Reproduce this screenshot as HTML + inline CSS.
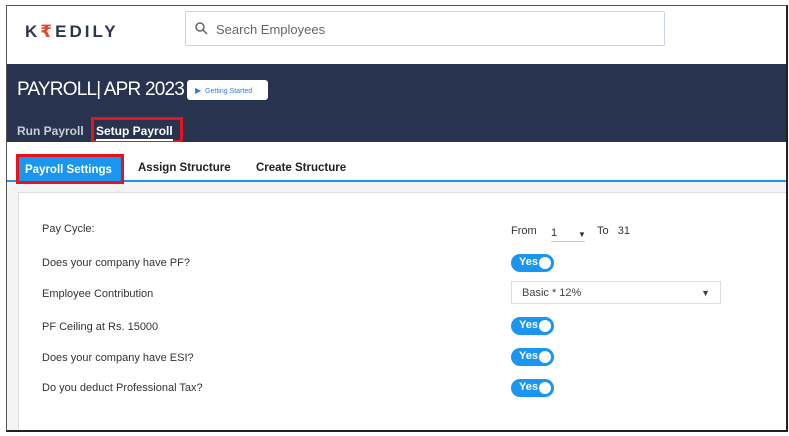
<!DOCTYPE html>
<html><head><meta charset="utf-8"><style>
*{margin:0;padding:0;box-sizing:border-box}
body{width:789px;height:436px;background:#fff;font-family:"Liberation Sans","DejaVu Sans",sans-serif;position:relative;overflow:hidden}
.frame{position:absolute;left:6px;top:5px;width:782px;height:427px;border:1px solid #555;border-right:2px solid #222;border-bottom:2px solid #222;overflow:hidden}
.abs{position:absolute}
.logo{left:18px;top:16px;font-size:17px;font-weight:bold;letter-spacing:3px;color:#2b3550}
.search{left:178px;top:5px;width:480px;height:35px;border:1px solid #c8d4e4;border-radius:2px;color:#666;font-size:13px;padding:10px 0 0 30px}
.nav{left:0;top:58px;width:782px;height:78px;background:#27334f}
.title{left:10px;top:15px;color:#fff;font-size:19px;letter-spacing:-0.8px;white-space:nowrap}
.gs{left:180px;top:16px;width:81px;height:20px;background:#fff;border-radius:3px;color:#2f7de1;font-size:7px;padding:6px 0 0 8px;white-space:nowrap}
.run{left:10px;top:60px;color:#c9ced8;font-size:12px;font-weight:bold}
.setup{left:89px;top:60px;color:#fff;font-size:12px;font-weight:bold;border-bottom:2px solid #fff;padding-bottom:1px}
.red{border:3px solid #e3141c}
.grey{left:0;top:136px;width:782px;height:300px;background:#f4f4f6}
.tabs{left:0;top:136px;width:782px;height:40px;background:#fff;border-bottom:2px solid #1a96f0}
.tab{font-size:11.5px;font-weight:bold;color:#222;top:20px}
.ps{left:9px;top:12px;width:108px;height:30px;background:#1a96f0;color:#fff;font-size:11.5px;font-weight:bold;padding:7px 0 0 6px;border:3px solid #e3141c}
.panel{left:11px;top:186px;width:775px;height:250px;background:#fff;border-left:1px solid #ddd;border-top:1px solid #ddd}
.lbl{font-size:11px;color:#333;left:24px}
.tog{left:504px;width:43px;height:18px;border-radius:9px;background:#1a96f0;color:#fff;font-size:11px;font-weight:bold;padding:2px 0 0 8px}
.tog:after{content:"";position:absolute;right:3px;top:3px;width:12px;height:12px;border-radius:50%;background:#fff}
</style></head><body>
<div class="frame">
<div class="abs logo">K<span style="color:#e8432e">₹</span>EDILY</div>
<div class="abs search"><svg class="abs" style="left:9px;top:10px" width="13" height="13" viewBox="0 0 13 13"><circle cx="5" cy="5" r="4" fill="none" stroke="#666" stroke-width="1.5"/><path d="M8 8l4 4" stroke="#666" stroke-width="1.5"/></svg>Search Employees</div>
<div class="abs nav">
<div class="abs title">PAYROLL| APR 2023</div>
<div class="abs gs"><span style="font-size:8px">▶</span>&nbsp; Getting Started</div>
<div class="abs run">Run Payroll</div>
<div class="abs red" style="left:84px;top:53px;width:92px;height:26px"></div>
<div class="abs setup">Setup Payroll</div>
</div>
<div class="abs grey"></div>
<div class="abs tabs">
<div class="abs ps">Payroll Settings</div>
<div class="abs tab" style="left:131px">Assign Structure</div>
<div class="abs tab" style="left:249px">Create Structure</div>
</div>
<div class="abs panel"></div>
<div class="abs lbl" style="top:217px;left:35px">Pay Cycle:</div>
<div class="abs lbl" style="top:251px;left:35px">Does your company have PF?</div>
<div class="abs lbl" style="top:282px;left:35px">Employee Contribution</div>
<div class="abs lbl" style="top:315px;left:35px">PF Ceiling at Rs. 15000</div>
<div class="abs lbl" style="top:346px;left:35px">Does your company have ESI?</div>
<div class="abs lbl" style="top:376px;left:35px">Do you deduct Professional Tax?</div>
<div class="abs lbl" style="top:219px;left:504px">From</div>
<div class="abs lbl" style="top:221px;left:544px;width:34px;height:15px;border-bottom:1px solid #ccc">1 <span style="position:absolute;left:27px;font-size:8px;top:3px">▼</span></div>
<div class="abs lbl" style="top:219px;left:590px">To &nbsp; 31</div>
<div class="abs tog" style="top:248px">Yes</div>
<div class="abs" style="left:504px;top:275px;width:210px;height:23px;border:1px solid #ddd;font-size:11px;color:#444;padding:5px 0 0 10px">Basic * 12%<span style="position:absolute;right:10px;top:6px;font-size:9px">▼</span></div>
<div class="abs tog" style="top:311px">Yes</div>
<div class="abs tog" style="top:342px">Yes</div>
<div class="abs tog" style="top:373px">Yes</div>
</div>
</body></html>
